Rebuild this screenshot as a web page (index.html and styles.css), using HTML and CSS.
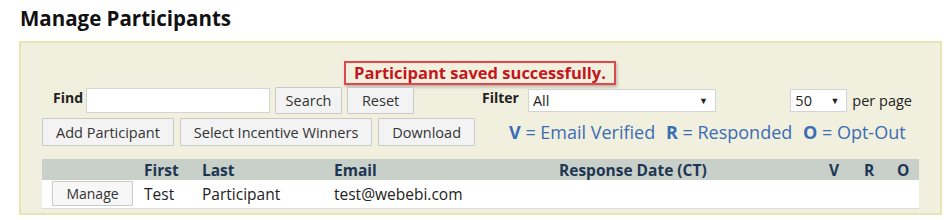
FILE: index.html
```html
<!DOCTYPE html>
<html lang="en">
<head>
<meta charset="UTF-8" />
<title>Manage Participants</title>
<link rel="stylesheet" href="styles.css">
</head>
<body>

<h1>Manage Participants</h1>

<div class="panel">

  <div class="message-wrap">
    <span class="message">Participant saved successfully.</span>
  </div>

  <div class="toolbar">
    <div class="find-row">
      <label class="lbl find-lbl">Find</label>
      <input type="text" class="find-input" />
      <button class="btn">Search</button>
      <button class="btn">Reset</button>
    </div>
    <div class="filter-row">
      <div class="filter-group">
        <label class="lbl">Filter</label>
        <div class="select wide"><span>All</span><span class="arrow">&#9660;</span></div>
      </div>
      <div class="perpage-group">
        <div class="select small"><span>50</span><span class="arrow">&#9660;</span></div>
        <span class="perpage">per page</span>
      </div>
    </div>
    <div class="action-row">
      <button class="btn">Add Participant</button>
      <button class="btn">Select Incentive Winners</button>
      <button class="btn">Download</button>
    </div>
    <div class="legend">
      <b>V</b> = Email Verified <b>R</b> = Responded <b>O</b> = Opt-Out
    </div>
  </div>

  <table class="participants">
    <thead>
      <tr>
        <th class="col-btn"></th>
        <th class="col-first">First</th>
        <th class="col-last">Last</th>
        <th class="col-email">Email</th>
        <th class="col-date">Response Date (CT)</th>
        <th class="col-v">V</th>
        <th class="col-r">R</th>
        <th class="col-o">O</th>
      </tr>
    </thead>
    <tbody>
      <tr>
        <td class="col-btn"><button class="btn manage">Manage</button></td>
        <td>Test</td>
        <td>Participant</td>
        <td>test@webebi.com</td>
        <td></td>
        <td></td>
        <td></td>
        <td></td>
      </tr>
    </tbody>
  </table>

</div>

</body>
</html>
```

FILE: styles.css
```css
* {
  box-sizing: border-box;
}
body {
  font-family: "Open Sans", "Noto Sans", sans-serif;
  margin: 0;
  padding: 0;
  background: #fff;
  color: #222;
}
h1 {
  font-size: 20.5px;
  font-weight: bold;
  margin: 0;
  padding: 4px 0 0 20px;
  height: 41px;
  color: #111;
}

/* Beige panel */
.panel {
  margin-left: 19px;
  width: 923px;
  height: 174px;
  background: #f1f0df;
  border: 2px solid #e9e4b4;
  padding: 0 22px 0 21px;
}

/* Status message */
.message-wrap {
  text-align: center;
  padding-top: 18px;
  height: 44px;
}
.message {
  display: inline-block;
  color: #c4161c;
  font-weight: bold;
  font-size: 16.5px;
  line-height: 20px;
  padding: 0 8px;
  border: 2px solid #e0484d;
  box-shadow: 1px 2px 3px rgba(0,0,0,0.25);
}

/* Toolbar */
.toolbar {
  display: grid;
  grid-template-columns: 440px 1fr;
  row-gap: 4px;
}
.find-row,
.action-row,
.filter-row,
.filter-group,
.perpage-group {
  display: flex;
  align-items: center;
}
.find-row {
  padding-left: 11px;
  gap: 5px;
  height: 27px;
}
.find-row .btn {
  width: 67px;
  padding: 0;
}
.action-row {
  gap: 6px;
  height: 28px;
}
.lbl {
  font-weight: bold;
  font-size: 14px;
  margin-right: -2px;
  align-self: flex-start;
  line-height: 18px;
}
.find-lbl {
  margin-top: 2px;
}
.find-input {
  width: 184px;
  height: 25px;
  border: 1px solid #d4d4d4;
  background: #fff;
}
.btn {
  font-family: inherit;
  font-size: 14.5px;
  color: #333;
  background: #f3f3f3;
  border: 1px solid #c9c9c9;
  border-radius: 1px;
  height: 27px;
  padding: 0 11px;
  cursor: pointer;
}
.action-row .btn {
  height: 28px;
  padding: 0 13px;
}

.filter-row {
  justify-content: space-between;
  padding-right: 6px;
}
.filter-group {
  gap: 11px;
}
.select {
  display: flex;
  justify-content: space-between;
  align-items: center;
  background: #fff;
  border: 1px solid #d4d4d4;
  height: 23px;
  padding: 0 7px 0 4px;
  font-size: 14.5px;
}
.select.wide {
  width: 188px;
}
.select.small {
  width: 57px;
}
.arrow {
  font-size: 9px;
}
.perpage {
  font-size: 14.5px;
  margin-left: 5px;
}

.legend {
  padding-left: 27px;
  color: #3b6db3;
  font-size: 18px;
  align-self: center;
}
.legend b {
  margin-left: 6px;
}
.legend b:first-child {
  margin-left: 0;
}

/* Participants table */
.participants {
  width: 877px;
  margin-top: 13px;
  border-collapse: collapse;
  font-size: 15.5px;
  table-layout: fixed;
}
.participants th {
  background: #c9cfc9;
  color: #1d3752;
  text-align: left;
  font-weight: bold;
  height: 21px;
  padding: 0;
  line-height: 20px;
}
.participants td {
  background: #fff;
  height: 28px;
  padding: 0;
  border-bottom: 1px solid #dcdcdc;
}
.col-btn {
  width: 102px;
  padding-left: 10px !important;
}
.col-first { width: 58px; }
.col-last { width: 132px; }
.col-email { width: 225px; }
.col-date { width: 270px; }
.col-v { width: 35px; }
.col-r { width: 33px; }
.col-o { width: 22px; }
.btn.manage {
  height: 25px;
  width: 81px;
  font-size: 14px;
  padding: 0;
  background: #f7f7f7;
  vertical-align: middle;
}
```
